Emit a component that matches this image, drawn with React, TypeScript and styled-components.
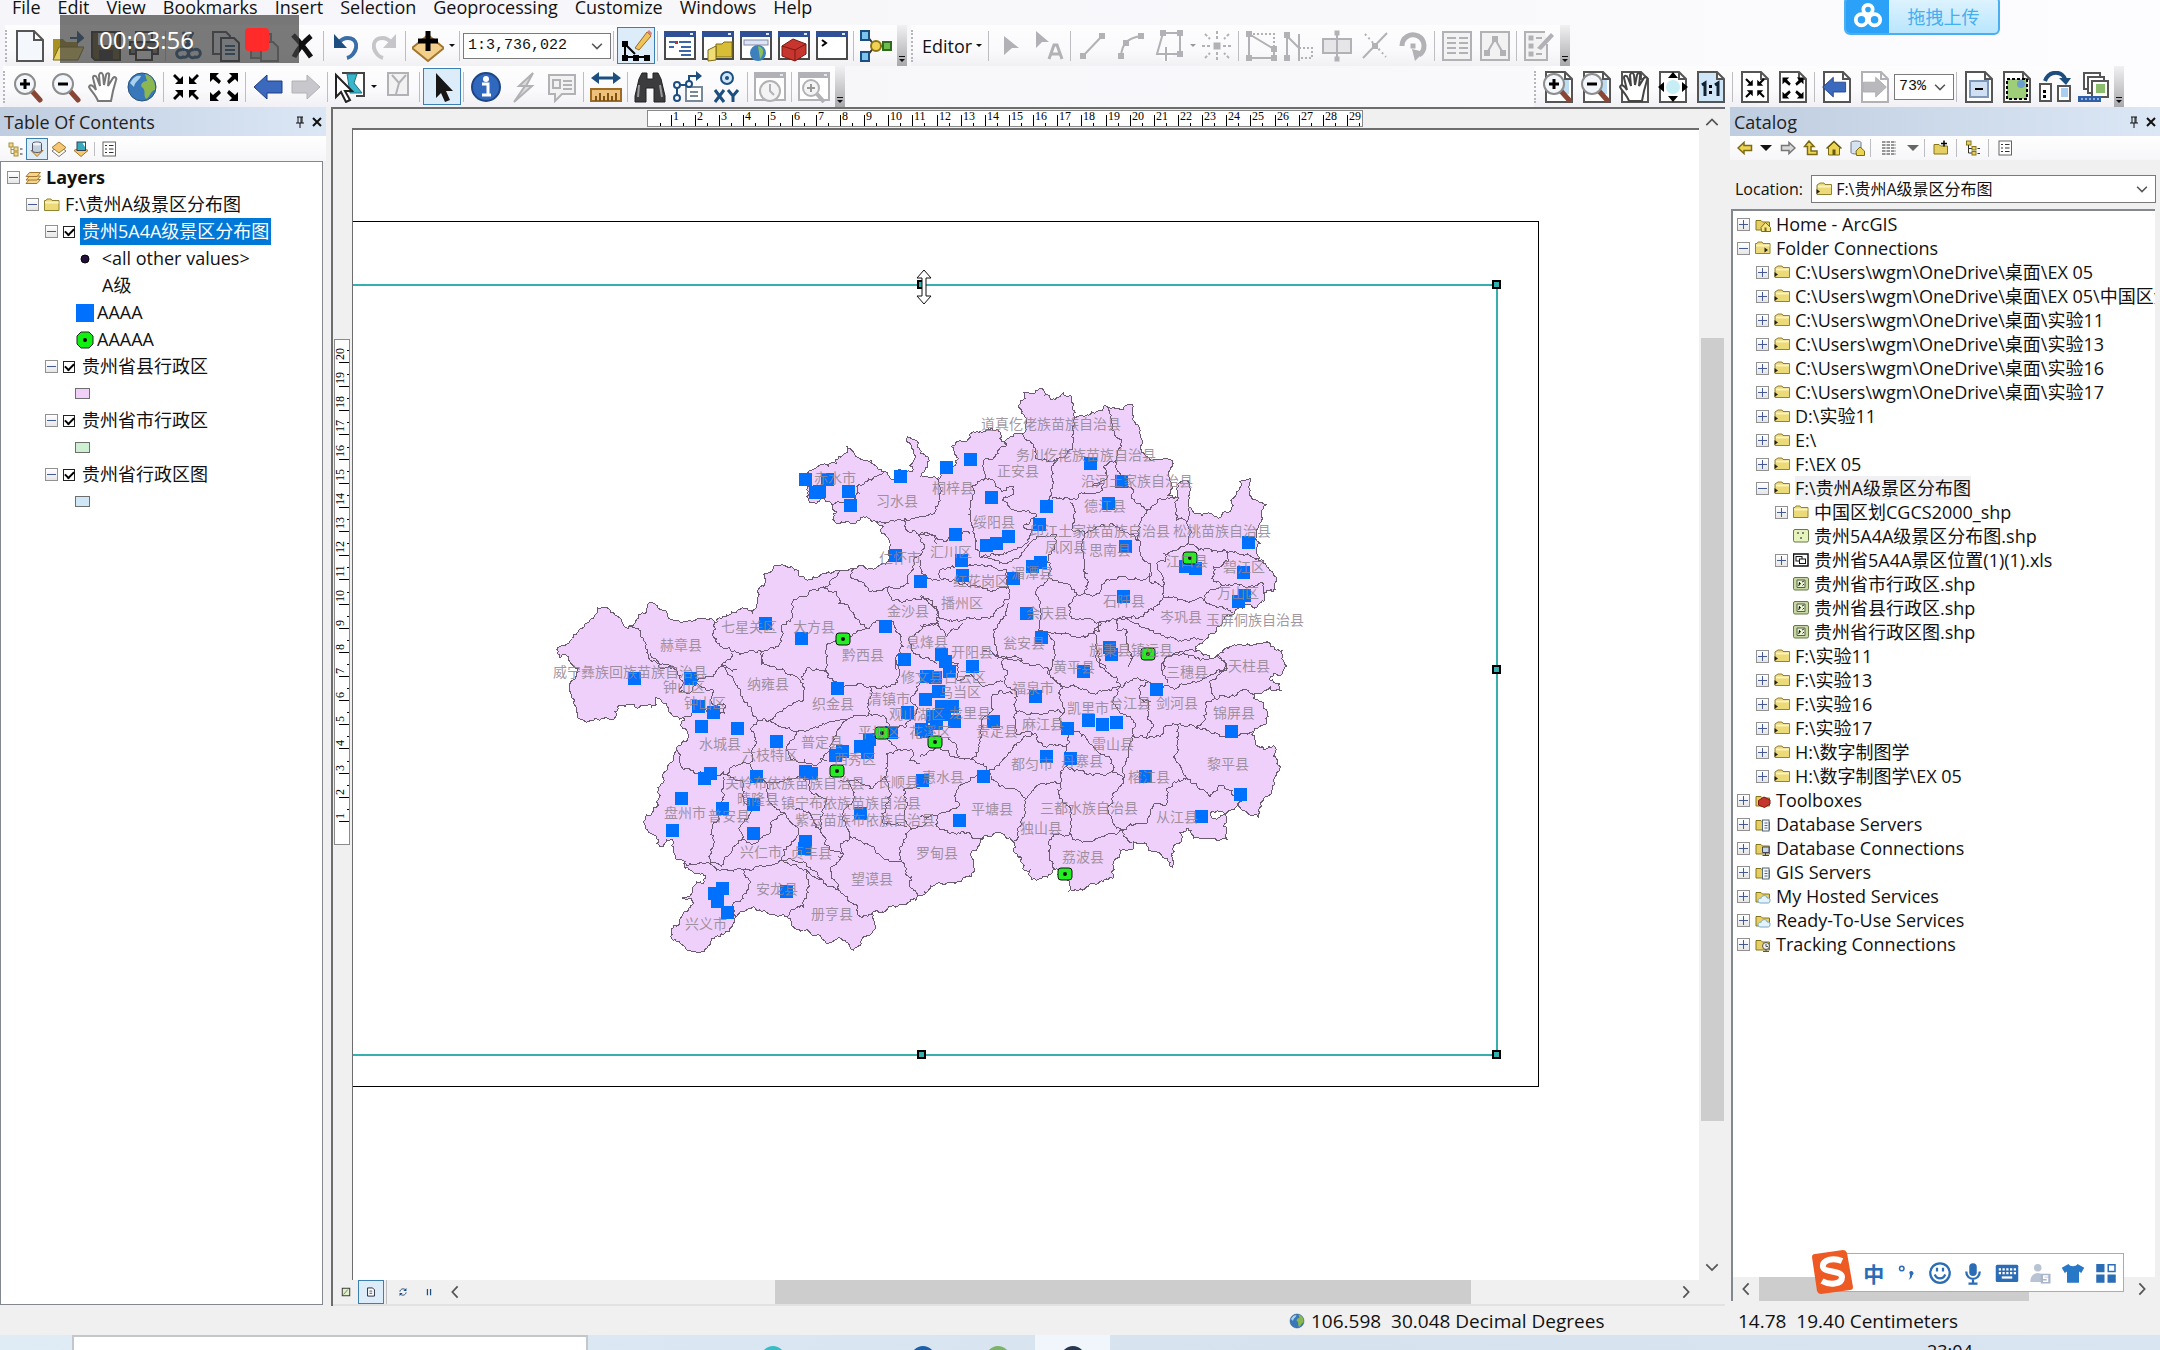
import React from 'react';
import styled, { createGlobalStyle, css } from 'styled-components';

const UI_FONT = "'Open Sans', 'Noto Sans CJK SC', sans-serif";
const MONO_FONT = "'Liberation Mono', 'Noto Sans CJK SC', monospace";

const GlobalStyle = createGlobalStyle`
  * { box-sizing: border-box; }
  body { margin: 0; background: #f0f0f0; font-family: ${UI_FONT}; font-size: 18px; color: #111; overflow: hidden; }
  button, select, input { font: inherit; color: inherit; margin: 0; }
  button { border: 0; padding: 0; background: none; }
`;

/* ---------- icons (32 x 32 grid) ---------- */

const G = '#b2b2b6';
const BLUE = '#1c4f80';
const NAVY = '#2f4f96';

const sheetShape = (c = '#555', fill = '#fff') => (
  <path d="M3 1H22L29 8V31H3Z M22 1V8H29" fill={fill} stroke={c} strokeWidth="2" />
);
const windowShape = (bar = NAVY, line = '#4a4a4a', fill = '#fff') => (
  <>
    <rect x="1" y="2" width="30" height="27" fill={fill} stroke={line} strokeWidth="2" />
    <rect x="0" y="1" width="32" height="6" fill={bar} />
    <rect x="26" y="3" width="3" height="2" fill="#dfe8f7" />
  </>
);
const lens = (sign: 'plus' | 'minus', x = 0) => (
  <g transform={`translate(${x} 0)`}>
    <path d="M20 20L28 29" stroke="#8a4634" strokeWidth="5" strokeLinecap="round" />
    <circle cx="13" cy="13" r="10" fill="#f3f7fb" stroke="#8d8d8d" strokeWidth="2" />
    <path d={sign === 'plus' ? 'M8 13H18M13 8V18' : 'M8 13H18'} stroke="#000" strokeWidth="3" />
  </g>
);
const handPath = 'M10 30C8 24 3 20 1 16C2 13 5 14 8 19L5 7C5 4 8 4 9 7L12 15L11 4C12 1 14 1 15 4L16 14L18 4C19 1 22 2 21 5L20 15L25 7C27 5 29 7 28 9L25 20L23 30Z';
const arrowsIn = (
  <g fill="#000">
    <path d="M13 13H5L8 10L3 5L5 3L10 8L13 5ZM19 13H27L24 10L29 5L27 3L22 8L19 5ZM13 19H5L8 22L3 27L5 29L10 24L13 27ZM19 19H27L24 22L29 27L27 29L22 24L19 27Z" />
  </g>
);
const arrowsOut = (
  <path fill="#000" d="M2 2H11L8 5L13 10L11 13L5 8L2 11ZM30 2H21L24 5L19 10L21 13L27 8L30 11ZM2 30H11L8 27L13 22L11 19L5 24L2 21ZM30 30H21L24 27L19 22L21 19L27 24L30 21Z" />
);
const globe = (
  <>
    <circle cx="16" cy="16" r="14" fill="#3877ba" stroke="#24527f" />
    <path d="M19 3C27 5 30 12 29 19C24 20 25 25 20 28C17 24 20 20 17 17C13 15 16 10 21 10Z" fill="#8bb751" />
    <path d="M4 12C8 5 12 4 15 5C13 10 9 10 8 16Z" fill="#a9d2ef" />
  </>
);
const dots = (pts: number[][], c = G, s = 6) => pts.map(([x, y], i) => (
  <rect key={i} x={x - s / 2} y={y - s / 2} width={s} height={s} fill={c} />
));
const arrowLeft = (c: string, line: string) => (
  <path d="M2 16L15 4V10H30V22H15V28Z" fill={c} stroke={line} strokeWidth="1" />
);
const folder = (
  <path d="M2 9H12L15 12H29V28H2Z" fill="#e5cf62" stroke="#86741c" strokeWidth="2" />
);

const ICONS: Record<string, React.ReactNode> = {
  new: <path d="M3 1H20L29 10V31H3Z M20 1V10H29" fill="#f4f8fd" stroke="#555" strokeWidth="2" />,
  open: <><path d="M1 9H11L14 12H26V29H1Z" fill="#a89120" /><path d="M1 30L7 17H32L26 30Z" fill="#e8d264" stroke="#7a6a18" /><path d="M18 8H26M26 3V12L31 8Z" stroke={BLUE} strokeWidth="2" fill={BLUE} /></>,
  save: <><path d="M2 2H30V30H5L2 27Z" fill="#5a4f1c" stroke="#222" strokeWidth="2" /><rect x="8" y="3" width="16" height="12" fill="#ddd" /><rect x="9" y="20" width="14" height="10" fill="#222" /></>,
  print: <><rect x="8" y="2" width="16" height="10" fill="#eee" stroke="#333" strokeWidth="2" /><rect x="2" y="12" width="28" height="12" fill="#777" stroke="#222" strokeWidth="2" /><rect x="8" y="20" width="16" height="10" fill="#fff" stroke="#222" strokeWidth="2" /></>,
  cut: <path d="M11 2L20 20M21 2L12 20M10 20A4 4 0 1 0 11 27A4 4 0 1 0 10 20M22 20A4 4 0 1 0 23 27A4 4 0 1 0 22 20" stroke={BLUE} strokeWidth="3" fill="none" />,
  copy: <><path d="M3 2H16L20 6V24H3Z" fill="#eef3fa" stroke="#445" strokeWidth="2" /><path d="M11 8H24L29 13V31H11Z" fill="#eef3fa" stroke="#334" strokeWidth="2" /><path d="M15 16H25M15 20H25M15 24H25" stroke={BLUE} strokeWidth="2" /></>,
  paste: <><rect x="3" y="4" width="20" height="24" fill="#ccc" stroke="#888" strokeWidth="2" /><path d="M13 12H25L30 17V31H13Z" fill="#eee" stroke="#888" strokeWidth="2" /></>,
  remove: <path d="M7 5C12 10 20 20 25 27M25 6C19 11 12 19 8 27" stroke="#111" strokeWidth="5" fill="none" />,
  undo: <><path d="M8 13C16 4 28 8 26 18C25 23 21 27 17 28" fill="none" stroke="#3a6ea8" strokeWidth="4" /><path d="M4 4V18H17Z" fill={BLUE} /></>,
  redo: <><path d="M24 13C16 4 4 8 6 18C7 23 11 27 15 28" fill="none" stroke="#c6c6ca" strokeWidth="4" /><path d="M28 4V18H15Z" fill="#c6c6ca" /></>,
  add: <><path d="M0 18L16 5L32 18L16 31Z" fill="#f3cf8c" stroke="#a2762c" strokeWidth="2" /><path d="M16 1V21M6 11H26" stroke="#000" strokeWidth="5" /></>,
  edit: <><path d="M5 14V27H25" stroke="#000" strokeWidth="2" fill="none" /><path d="M5 14L15 24" stroke="#000" strokeWidth="2" />{dots([[5, 14], [5, 28], [16, 28], [27, 28]], '#000', 6)}<path d="M15 18L27 2L31 6L19 20Z" fill="#f0c35a" stroke="#9c6a20" /><path d="M27 2L31 6L32 3L29 0Z" fill="#d98080" /></>,
  table: <>{windowShape()}<path d="M5 12H13M5 17H10M15 12H27M17 17H27M15 21H27M17 25H27" stroke="#3b66a8" strokeWidth="2" /><rect x="11" y="11" width="3" height="3" fill="#b33" /></>,
  catalog: <>{windowShape()}<path d="M14 14H20L22 12H30V27H14Z" fill="#d8bd36" stroke="#7c6a14" /><path d="M6 20L14 16V30L6 31Z" fill="#f0dd74" stroke="#7c6a14" /></>,
  search: <>{windowShape()}<rect x="4" y="10" width="24" height="5" fill="#dbe6f4" stroke="#88a" /><circle cx="18" cy="23" r="8" fill="#3c80bd" /><path d="M18 16C24 17 25 23 20 29Z" fill="#8bc05a" /></>,
  toolbox: <>{windowShape()}<path d="M4 16L15 9L28 14V24L17 31L4 26Z" fill="#c7362e" stroke="#7d1713" /><path d="M4 16L17 20L28 14M17 20V31" stroke="#7d1713" fill="none" /></>,
  python: <>{windowShape()}<path d="M6 10L10 13L6 16" stroke="#000" strokeWidth="2" fill="none" /></>,
  model: <><path d="M8 7L14 15M8 25L14 17M20 16H24" stroke="#333" strokeWidth="2" /><rect x="1" y="1" width="8" height="9" fill="#7cc4ee" stroke="#1c4f80" strokeWidth="2" /><rect x="1" y="22" width="8" height="9" fill="#7cc4ee" stroke="#1c4f80" strokeWidth="2" /><circle cx="16" cy="16" r="5" fill="#f2d254" stroke="#8c7414" strokeWidth="2" /><rect x="23" y="12" width="8" height="8" fill="#6dbb4c" stroke="#2c6c1c" strokeWidth="2" /></>,
  gArrow: <path d="M9 6L24 18H17L9 25Z" fill={G} />,
  gArrowA: <><path d="M3 1L16 12H9L3 18Z" fill={G} /><path d="M16 29L21 15H24L29 29M18 24H27" fill="none" stroke={G} strokeWidth="3" /></>,
  gLine: <><path d="M6 26L25 6" stroke={G} strokeWidth="2" />{dots([[6, 26], [25, 6]])}</>,
  gArc: <><path d="M6 26C7 14 12 8 26 6" stroke={G} strokeWidth="2" fill="none" />{dots([[6, 26], [11, 13], [26, 6]])}</>,
  gPoly: <><path d="M4 24L10 3H27V24Z" stroke={G} strokeWidth="2" fill="none" />{dots([[10, 3], [27, 3], [27, 24]])}<path d="M13 17V31M6 24H20" stroke="#fff" strokeWidth="5" /><path d="M13 17V31M6 24H20" stroke={G} strokeWidth="2" /></>,
  gPoint: <>{dots([[16, 16]], G, 7)}<path d="M16 1V10M16 22V31M1 16H10M22 16H31M4 4L9 9M28 4L23 9M4 28L9 23M28 28L23 23" stroke={G} strokeWidth="2" strokeDasharray="3 2" /></>,
  gCut: <><path d="M4 4V28H29V19L4 4" stroke={G} strokeWidth="2" fill="none" /><path d="M4 4H29V19" stroke={G} strokeWidth="2" strokeDasharray="2 2" fill="none" />{dots([[4, 4], [4, 28], [29, 28], [29, 19]])}</>,
  gReshape: <><path d="M4 28V6L16 18M16 4V31" stroke={G} strokeWidth="2" fill="none" /><path d="M16 18H29V28H16" stroke={G} strokeWidth="2" strokeDasharray="2 2" fill="none" />{dots([[4, 5], [4, 28]])}</>,
  gSplit: <><rect x="2" y="9" width="28" height="14" fill="#e6e6e8" stroke={G} strokeWidth="2" /><path d="M16 1V31" stroke={G} strokeWidth="2" />{dots([[16, 3], [16, 29]], G, 5)}</>,
  gCross: <><path d="M4 28L28 3" stroke={G} strokeWidth="2" /><path d="M6 4L27 27" stroke={G} strokeWidth="2" strokeDasharray="2 3" />{dots([[16, 16]])}</>,
  gRotate: <><path d="M5 16A11 11 0 1 1 22 25" stroke={G} strokeWidth="5" fill="none" /><path d="M15 19L27 22L18 31Z" fill={G} />{dots([[16, 16]], G, 5)}</>,
  gAttr: <><rect x="2" y="2" width="28" height="28" fill="#f2f2f3" stroke={G} strokeWidth="2" /><path d="M6 8H15M18 8H27M6 13H15M18 13H27M6 18H15M18 18H27M6 23H15M18 23H27" stroke={G} strokeWidth="2" /></>,
  gSketch: <><rect x="2" y="2" width="28" height="28" fill="#f2f2f3" stroke={G} strokeWidth="2" /><path d="M8 23L16 9L24 23" stroke={G} strokeWidth="2" fill="none" />{dots([[8, 23], [16, 9], [24, 23]])}</>,
  gCreate: <><path d="M24 14V30H2V2H22" fill="#f2f2f3" stroke={G} strokeWidth="2" />{dots([[8, 8], [8, 16], [8, 24]], G, 5)}<path d="M13 8H19M13 24H19" stroke={G} strokeWidth="2" /><path d="M14 18L28 3L31 6L18 20Z" fill={G} /></>,
  zoomIn: lens('plus'),
  zoomOut: lens('minus'),
  hand: <path d={handPath} fill="#fff" stroke="#777" strokeWidth="2" />,
  globe,
  fixedIn: arrowsIn,
  fixedOut: arrowsOut,
  back: arrowLeft('#3a69bd', '#1d3f85'),
  forward: <g transform="translate(32 0) scale(-1 1)">{arrowLeft('#c8c8cc', '#b2b2b6')}</g>,
  select: <><path d="M8 2H30V25H22" fill="#fff" stroke="#444" strokeWidth="2" /><path d="M13 3H23L20 12L28 22L16 22Z" fill="#38b7cc" stroke="#216f86" /><path d="M2 4V26L7 21L12 31L16 29L11 20H18Z" fill="#fff" stroke="#222" strokeWidth="2" /></>,
  gClear: <><rect x="6" y="2" width="20" height="22" fill="#f2f2f3" stroke={G} strokeWidth="2" /><path d="M10 4L17 12L24 4M17 12L14 23" stroke={G} strokeWidth="2" fill="none" /></>,
  pointer: <path d="M10 2V27L15 22L19 31L24 29L20 20H27Z" fill="#161616" />,
  info: <><circle cx="16" cy="16" r="14" fill="#3068bd" stroke="#1d4587" strokeWidth="2" /><circle cx="16" cy="8" r="3" fill="#fff" /><path d="M12 13H18V24M12 24H21" stroke="#fff" strokeWidth="3" fill="none" /></>,
  gFlash: <path d="M25 2L11 15H17L6 31L24 15H18Z" fill="#ddd" stroke={G} strokeWidth="2" />,
  gHtml: <><path d="M3 4H29V23H16L9 30V23H3Z" fill="#f2f2f3" stroke={G} strokeWidth="2" /><rect x="7" y="9" width="7" height="8" fill="none" stroke={G} strokeWidth="2" /><path d="M17 10H26M17 14H26M17 18H26" stroke={G} strokeWidth="2" /></>,
  measure: <><path d="M5 7H27" stroke={BLUE} strokeWidth="3" /><path d="M9 1V13L1 7ZM23 1V13L31 7Z" fill={BLUE} /><rect x="1" y="18" width="30" height="12" fill="#eec07a" stroke="#9d6c24" strokeWidth="2" /><path d="M6 30V25M10 30V22M14 30V25M18 30V22M22 30V25M26 30V22" stroke="#7d5215" strokeWidth="2" /></>,
  find: <><path d="M8 2H13V8H19V2H24L27 8L31 25V31H20V17H12V31H1V25L5 8Z" fill="#3c3c3e" stroke="#222" /><path d="M5 14L4 26M26 14L28 26" stroke="#9a9a9c" strokeWidth="2" /></>,
  route: <><path d="M5 26V14H17V5H26" stroke={BLUE} strokeWidth="2" fill="none" /><path d="M24 0V10L30 5Z" fill={BLUE} /><rect x="14" y="16" width="16" height="14" fill="#fff" stroke="#789" strokeWidth="2" /><path d="M18 21H26M18 25H26" stroke="#789" strokeWidth="2" /><circle cx="5" cy="27" r="3" fill="#fff" stroke={BLUE} strokeWidth="2" /><circle cx="5" cy="14" r="3" fill="#fff" stroke={BLUE} strokeWidth="2" /><circle cx="17" cy="13" r="3" fill="#fff" stroke={BLUE} strokeWidth="2" /></>,
  xy: <><circle cx="17" cy="7" r="6" fill="#cfe6f8" stroke={BLUE} strokeWidth="2" /><circle cx="17" cy="7" r="2" fill={BLUE} /><path d="M5 19L14 31M14 19L5 31M18 19L23 25L28 19M23 25V31" stroke={BLUE} strokeWidth="3" fill="none" /></>,
  gTime: <>{windowShape(G, G)}<circle cx="16" cy="20" r="10" fill="#f4f4f5" stroke={G} strokeWidth="2" /><path d="M16 13V20L20 24" stroke={G} strokeWidth="2" fill="none" /></>,
  gViewer: <>{windowShape(G, G)}<circle cx="13" cy="17" r="8" fill="#f4f4f5" stroke={G} strokeWidth="2" /><path d="M13 13V21M9 17H17" stroke="#999" strokeWidth="2" /><path d="M19 23L26 31" stroke={G} strokeWidth="4" /></>,
  pZoomIn: <>{sheetShape()}<rect x="14" y="9" width="12" height="14" fill="#bcdcf2" />{lens('plus', -2)}</>,
  pZoomOut: <>{sheetShape()}<rect x="14" y="9" width="12" height="14" fill="#bcdcf2" />{lens('minus', -2)}</>,
  pPan: <>{sheetShape()}<path d={handPath} fill="#fff" stroke="#444" strokeWidth="2" /></>,
  pFull: <>{sheetShape()}<circle cx="16" cy="16" r="7" fill="#c7edf5" /><path d="M16 1L21 7H11ZM16 31L21 25H11ZM1 16L7 11V21ZM31 16L25 11V21Z" fill="#000" /></>,
  pActual: <>{sheetShape('#555', '#cfe6f8')}<path d="M7 14L10 12V25M20 14L23 12V25" fill="none" stroke="#123" strokeWidth="3" /><rect x="14" y="14" width="3" height="3" /><rect x="14" y="20" width="3" height="3" /></>,
  pIn: <>{sheetShape()}<g transform="translate(4 5) scale(0.75)">{arrowsIn}</g></>,
  pOut: <>{sheetShape()}<g transform="translate(4 5) scale(0.75)">{arrowsOut}</g></>,
  pBack: <>{sheetShape()}<g transform="translate(0 3) scale(0.82)">{arrowLeft('#3a69bd', '#1d3f85')}</g></>,
  pForward: <>{sheetShape(G)}<g transform="translate(29 3) scale(-0.82 0.82)">{arrowLeft('#b9b9bd', '#a8a8ac')}</g></>,
  pDraft: <>{sheetShape()}<rect x="7" y="10" width="18" height="16" fill="#cfe0f2" stroke="#7d98b8" strokeWidth="2" /><path d="M12 18H20" stroke="#000" strokeWidth="2" /></>,
  pFocus: <>{sheetShape()}<rect x="6" y="8" width="20" height="20" fill="#9fce78" stroke="#000" strokeWidth="2" strokeDasharray="3 2" /><circle cx="20" cy="13" r="4" fill="#6b9fd0" /></>,
  pLayout: <><path d="M6 10C10 -1 24 -1 27 10" stroke={BLUE} strokeWidth="4" fill="none" /><path d="M20 7H32L27 14Z" fill={BLUE} /><path d="M1 13H12V30H1ZM19 15H31V30H19Z" fill="#fff" stroke="#555" strokeWidth="2" /><rect x="22" y="17" width="7" height="9" fill="#a8cdee" /><rect x="4" y="19" width="3" height="3" /><rect x="4" y="24" width="3" height="3" /></>,
  pPages: <><rect x="7" y="2" width="16" height="16" fill="#fff" stroke="#555" strokeWidth="2" /><rect x="11" y="6" width="16" height="16" fill="#fff" stroke="#555" strokeWidth="2" /><rect x="15" y="10" width="16" height="16" fill="#fff" stroke="#555" strokeWidth="2" /><rect x="19" y="13" width="9" height="9" fill="#8bbd6a" /><rect x="1" y="25" width="23" height="6" fill="#2e5fa8" /><path d="M4 28H22" stroke="#fff" strokeDasharray="2 2" /></>,
  tocOrder: <><rect x="4" y="4" width="8" height="8" fill="#f0d794" stroke="#a98f3c" strokeWidth="2" /><path d="M8 12V25H14M8 17H14" stroke="#a98f3c" strokeWidth="2" fill="none" /><rect x="14" y="12" width="8" height="8" fill="#f0d794" stroke="#a98f3c" strokeWidth="2" /><rect x="14" y="22" width="8" height="8" fill="#f0d794" stroke="#a98f3c" strokeWidth="2" /><path d="M26 16H31M26 26H31" stroke="#333" strokeWidth="2" /></>,
  tocSource: <><path d="M4 19L16 31L28 19Z" fill="#f3c871" stroke="#a2762c" strokeWidth="2" /><path d="M7 5C7 1 25 1 25 5V20C25 24 7 24 7 20Z" fill="#c3cfdd" stroke="#556" strokeWidth="2" /><ellipse cx="16" cy="6" rx="8" ry="3" fill="#eef3f8" /></>,
  tocVisible: <><path d="M2 20L16 10L30 20L16 31Z" fill="#fff" stroke="#777" strokeWidth="2" /><path d="M2 13L16 2L30 13L16 24Z" fill="#f3c871" stroke="#a2762c" strokeWidth="2" /></>,
  tocSelect: <><path d="M2 19L16 31L30 19L16 12Z" fill="#f3c871" stroke="#a2762c" strokeWidth="2" /><rect x="8" y="2" width="17" height="17" fill="#39a9bd" stroke="#345" strokeWidth="2" /><path d="M19 4H24V12Z" fill="#fff" /></>,
  options: <><rect x="4" y="2" width="25" height="28" fill="#fff" stroke="#666" strokeWidth="2" /><path d="M8 9H12M16 9H25M8 16H12M16 16H25M8 23H12M16 23H25" stroke="#333" strokeWidth="2" /></>,
  cBack: <path d="M2 16L14 5V11H29V21H14V27Z" fill="#ecd454" stroke="#7c6a14" strokeWidth="3" />,
  cForward: <path d="M30 16L18 5V11H3V21H18V27Z" fill="#d8d8da" stroke="#777" strokeWidth="3" />,
  cUp: <path d="M12 2L22 13H16V22H28V29H9V13H3Z" fill="#ecd454" stroke="#7c6a14" strokeWidth="3" />,
  cHome: <><path d="M5 15V30H27V15L16 4Z" fill="#ecd454" stroke="#7c6a14" strokeWidth="2" /><path d="M1 17L16 3L31 17" stroke="#6a5a10" strokeWidth="3" fill="none" /><rect x="13" y="19" width="6" height="11" fill="#6a5a10" /></>,
  cDb: <><path d="M4 5C4 1 24 1 24 5V25C24 29 4 29 4 25Z" fill="#d5e3f0" stroke="#778" strokeWidth="2" /><path d="M14 22L22 14L31 22V31H15Z" fill="#ecd454" stroke="#7c6a14" strokeWidth="2" /></>,
  cList: <path d="M2 4H30M2 10H30M2 16H30M2 22H30M2 28H30" stroke="#333" strokeWidth="2" strokeDasharray="7 2" />,
  cConnect: <>{folder}<path d="M22 1V13M16 7H28" stroke="#000" strokeWidth="3" /></>,
  cTree: <><rect x="3" y="2" width="9" height="8" fill="#e5cf62" stroke="#86741c" strokeWidth="2" /><path d="M7 10V26H14M7 17H14" stroke="#333" strokeWidth="2" fill="none" /><rect x="14" y="13" width="8" height="7" fill="#e5cf62" stroke="#86741c" strokeWidth="2" /><rect x="14" y="23" width="8" height="7" fill="#e5cf62" stroke="#86741c" strokeWidth="2" /><path d="M25 17H30M25 27H30" stroke="#333" strokeWidth="2" /></>,
  layers: <><path d="M2 27L9 19H31L24 27Z" fill="#f6d48c" stroke="#a2762c" strokeWidth="2" /><path d="M2 20L9 12H31L24 20Z" fill="#f6d48c" stroke="#a2762c" strokeWidth="2" /><path d="M2 13L9 5H31L24 13Z" fill="#f6d48c" stroke="#a2762c" strokeWidth="2" /></>,
  folder: <><path d="M1 7H4L6 4H14L16 7H30V27H1Z" fill="#ecd978" stroke="#93822f" strokeWidth="2" /><path d="M2 11H29" stroke="#fbf3be" strokeWidth="4" /></>,
  folderLink: <><path d="M2 8L8 4H16L18 7H31V27H2Z" fill="#ecd978" stroke="#93822f" strokeWidth="2" /><path d="M4 11H30" stroke="#fbf3be" strokeWidth="4" /><path d="M1 16L8 21L1 26Z" fill="#222" /></>,
  folderHome: <>{folder}<path d="M12 23L21 13L31 23V31H13Z" fill="#f6e684" stroke="#7c6a14" strokeWidth="2" /><rect x="19" y="23" width="4" height="8" fill="#7c6a14" /></>,
  folderConn: <><path d="M1 7H4L6 4H14L16 7H30V27H1Z" fill="#ecd978" stroke="#93822f" strokeWidth="2" /><path d="M2 11H29" stroke="#fbf3be" strokeWidth="4" /><path d="M19 15L26 20L19 25Z" fill="#222" /></>,
  folderTool: <>{folder}<path d="M7 17L18 10L30 16V24L19 31L7 26Z" fill="#c7362e" stroke="#7d1713" strokeWidth="2" /></>,
  folderServer: <>{folder}<rect x="15" y="8" width="13" height="22" fill="#f3f7fb" stroke="#567" strokeWidth="2" /><path d="M19 14H25M19 19H25M19 24H25" stroke="#567" strokeWidth="2" /></>,
  folderDb: <>{folder}<path d="M15 14H28V25H15Z" fill="#c5d6e8" stroke="#445" strokeWidth="2" /><path d="M21 25V31M15 31H28" stroke="#445" strokeWidth="2" /></>,
  folderCloud: <>{folder}<path d="M8 29C3 24 9 19 12 21C14 13 24 14 24 20C31 19 32 27 27 30H9Z" fill="#e3f2fb" stroke="#7ba6c4" strokeWidth="2" /></>,
  folderTrack: <>{folder}<circle cx="22" cy="20" r="7" fill="#eee" stroke="#555" strokeWidth="2" /><path d="M22 16V21H26M22 27V31M16 31H28" stroke="#555" strokeWidth="2" fill="none" /></>,
  shpPoint: <><rect x="1" y="3" width="30" height="25" rx="3" fill="#e6f3bd" stroke="#67774a" strokeWidth="2" />{dots([[10, 10], [20, 10], [16, 20]], '#333', 3)}</>,
  shpPoly: <><rect x="1" y="3" width="30" height="25" rx="3" fill="#c8d8a4" stroke="#67774a" strokeWidth="2" /><path d="M8 8H24V23H8Z" fill="#e9f3d2" stroke="#555f44" strokeWidth="2" /><path d="M11 20L15 15L12 12M18 12L22 10M19 19L22 16" stroke="#333" strokeWidth="2" /></>,
  xls: <><rect x="1" y="4" width="29" height="24" fill="#fff" stroke="#111" strokeWidth="3" /><rect x="6" y="9" width="12" height="9" fill="#fff" stroke="#111" strokeWidth="2" /><rect x="13" y="14" width="12" height="9" fill="#fff" stroke="#111" strokeWidth="2" /></>,
  dataView: <><rect x="4" y="4" width="24" height="24" fill="#dfeecb" stroke="#333" strokeWidth="3" /><path d="M8 24L22 8" stroke="#6b8c4a" strokeWidth="3" /></>,
  layoutView: <><path d="M5 3H21L27 9V29H5Z" fill="#fff" stroke="#223" strokeWidth="3" /><path d="M11 13H20M11 20H20" stroke="#346" strokeWidth="3" /></>,
  refresh: <><path d="M6 15C7 6 18 3 24 9M26 17C25 26 14 29 8 23" fill="none" stroke={BLUE} strokeWidth="3" /><path d="M27 3V13H17ZM5 29V19H15Z" fill={BLUE} /></>,
  pause: <path d="M9 6H13V26H9ZM19 6H23V26H19Z" fill={BLUE} />,
};

const Svg = styled.svg<{ $s: number }>`
  width: ${p => p.$s}px;
  height: ${p => p.$s}px;
  flex: none;
  display: block;
`;
const Icon = ({ name, size = 32 }: { name: string; size?: number }) => (
  <Svg $s={size} viewBox="0 0 32 32" aria-hidden="true">{ICONS[name]}</Svg>
);

/* ---------- shell ---------- */

const Shell = styled.div`
  height: 100vh;
  display: flex;
  flex-direction: column;
  background: #f0f0f0;
`;
const Chrome = styled.header`
  background: linear-gradient(90deg, #f6f5f9 0%, #f8f7fa 60%, #fdfcff 100%);
  display: flex;
  flex-direction: column;
`;
const MenuBar = styled.nav`
  height: 25px;
  display: flex;
  gap: 17px;
  padding-left: 12px;
`;
const MenuItem = styled.button`
  font-size: 18px;
  line-height: 14px;
  height: 14px;
  white-space: nowrap;
`;
const BarRow = styled.div<{ $spread?: boolean }>`
  display: flex;
  height: 41px;
  gap: 4px;
  padding: 0 36px 0 ${p => (p.$spread ? 3 : 5)}px;
  justify-content: ${p => (p.$spread ? 'space-between' : 'flex-start')};
`;
const Bar = styled.div`
  display: flex;
  align-items: center;
  background: linear-gradient(180deg, #fdfdfe, #fafafc 60%, #f1f0f4);
`;
const Grip = styled.span`
  width: 4px;
  height: 32px;
  margin-right: 2px;
  border-left: 2px dotted #b6b6ba;
`;
const Divider = styled.span<{ $h?: number }>`
  width: 2px;
  height: ${p => p.$h ?? 30}px;
  margin: 0 2px;
  border-left: 1px solid #bdbdc2;
  flex: none;
`;
const ToolButton = styled.button<{ $on?: boolean; $w?: number; $h?: number }>`
  width: ${p => p.$w ?? 38}px;
  height: ${p => p.$h ?? 37}px;
  display: grid;
  place-items: center;
  flex: none;
  ${p => p.$on && css`background: #dcecf8; box-shadow: inset 0 0 0 1px #3c7fb1;`}
`;
const Caret = styled.span<{ $c?: string; $s?: number }>`
  border: ${p => p.$s ?? 3}px solid transparent;
  border-top-color: ${p => p.$c ?? '#111'};
  border-bottom: 0;
`;
const EndCap = styled.button`
  align-self: stretch;
  width: 10px;
  margin-left: 2px;
  background: linear-gradient(180deg, #f1f1f3, #a9a9ad);
  display: flex;
  flex-direction: column;
  align-items: center;
  justify-content: flex-end;
  gap: 2px;
  padding-bottom: 4px;
  &::before { content: ''; width: 6px; border-top: 1px solid #111; }
`;
const TextButton = styled.button`
  display: flex;
  align-items: center;
  gap: 4px;
  padding: 0 4px 0 5px;
  font-size: 18px;
`;
const SelectBox = styled.span<{ $w?: number; $h: number }>`
  display: flex;
  align-items: center;
  height: ${p => p.$h}px;
  ${p => (p.$w ? css`width: ${p.$w}px;` : css`flex: 1;`)}
  background: #fff;
  border: 1px solid #7a7a7a;
  padding: 0 7px 0 4px;
  min-width: 0;
`;
const Select = styled.select<{ $mono?: boolean }>`
  appearance: none;
  border: 0;
  padding: 0;
  background: none;
  flex: 1;
  min-width: 0;
  width: 0;
  font-family: ${p => (p.$mono ? MONO_FONT : UI_FONT)};
  font-size: ${p => (p.$mono ? 15 : 16)}px;
`;
const Chevron = ({ dir = 'down', size = 12 }: { dir?: 'down' | 'up' | 'left' | 'right'; size?: number }) => {
  const d = { down: 'M3 10L16 23L29 10', up: 'M3 23L16 10L29 23', left: 'M22 3L10 16L22 29', right: 'M10 3L22 16L10 29' }[dir];
  return <Svg $s={size} viewBox="0 0 32 32" aria-hidden="true"><path d={d} fill="none" stroke="#555" strokeWidth="4" /></Svg>;
};

type Tool = string;
const Tools = ({ items }: { items: Tool[] }) => (
  <>
    {items.map((t, i) => {
      if (t === '|') return <Divider key={i} />;
      if (t === 'v') return <ToolButton key={i} $w={10} aria-label="more"><Caret /></ToolButton>;
      if (t === 'g') return <ToolButton key={i} $w={10} aria-label="more"><Caret $c="#999" /></ToolButton>;
      const on = t.startsWith('*');
      const name = on ? t.slice(1) : t;
      return <ToolButton key={i} $on={on} aria-label={name}><Icon name={name} /></ToolButton>;
    })}
  </>
);
const BarEnd = () => <EndCap aria-label="toolbar options"><Caret /></EndCap>;

/* ---------- docked panels ---------- */

const Main = styled.main`
  flex: 1;
  min-height: 0;
  display: flex;
`;
const Panel = styled.section<{ $w: number }>`
  width: ${p => p.$w}px;
  flex: none;
  display: flex;
  flex-direction: column;
  min-height: 0;
`;
const PanelHead = styled.h2`
  margin: 0;
  height: 29px;
  display: flex;
  align-items: center;
  padding: 0 4px;
  gap: 6px;
  font-size: 18px;
  font-weight: 400;
  color: #222;
  background: linear-gradient(90deg, #bfcde0, #dbe7f5);
`;
const HeadTitle = styled.span`flex: 1;`;
const HeadButton = styled.button`
  width: 11px;
  height: 16px;
  display: grid;
  place-items: center;
`;
const PinIcon = () => <Svg $s={12} viewBox="0 0 12 12"><path d="M3 1H9M4 1V7M8 1V7M7 1V7M2 7H10M6 7V12" stroke="#111" fill="none" /></Svg>;
const CloseIcon = () => <Svg $s={10} viewBox="0 0 10 10"><path d="M1 1L9 9M9 1L1 9" stroke="#111" strokeWidth="2" /></Svg>;
const PanelBar = styled.div<{ $h: number }>`
  height: ${p => p.$h}px;
  display: flex;
  align-items: center;
  padding-left: 4px;
  background: linear-gradient(180deg, #fff, #f6f5f8);
`;
const Tree = styled.ul<{ $kind: 'toc' | 'catalog' }>`
  list-style: none;
  margin: ${p => (p.$kind === 'toc' ? '0 3px 1px 0' : '0 5px 0 1px')};
  padding: ${p => (p.$kind === 'toc' ? '2px 0 0 6px' : '1px 0 0 4px')};
  flex: 1;
  background: #fff;
  border: solid #828790;
  border-width: ${p => (p.$kind === 'toc' ? '1px' : '2px 0 0 2px')};
  overflow: hidden;
`;
const Row = styled.li<{ $h: number; $pad: number }>`
  height: ${p => p.$h}px;
  padding-left: ${p => p.$pad}px;
  display: flex;
  align-items: center;
  gap: 5px;
  white-space: nowrap;
  font-size: 18px;
  line-height: ${p => p.$h}px;
`;
const Expander = styled.button<{ $plus?: boolean }>`
  width: 13px;
  height: 13px;
  flex: none;
  border: 1px solid #919191;
  background:
    linear-gradient(#445a94, #445a94) center / 9px 1px no-repeat,
    ${p => (p.$plus ? 'linear-gradient(#445a94, #445a94) center / 1px 9px no-repeat,' : '')}
    linear-gradient(180deg, #fff, #e6e6e8);
`;
const Blank = styled.span`width: 13px; flex: none;`;
const RowText = styled.span<{ $mark?: 'selected' | 'soft'; $bold?: boolean }>`
  font-weight: ${p => (p.$bold ? 700 : 400)};
  ${p => p.$mark === 'selected' && css`background: #0078d7; color: #fff;`}
  ${p => p.$mark === 'soft' && css`background: #f1f1f3;`}
`;
const LayerLabel = styled.label<{ $on?: boolean }>`
  padding: 0 2px;
  ${p => p.$on && css`background: #0078d7; color: #fff;`}
`;
const Check = styled.input`
  appearance: none;
  width: 12px;
  height: 12px;
  flex: none;
  border: 1px solid #222;
  background: #fff;
  display: grid;
  place-items: center;
  &:checked::after {
    content: '';
    width: 7px;
    height: 4px;
    border: solid #000;
    border-width: 0 0 2px 2px;
    transform: translateY(-1px) rotate(-45deg);
  }
`;
const Swatch = styled.span<{ $c: string }>`
  width: 15px;
  height: 11px;
  border: 1px solid #6e6e6e;
  background: ${p => p.$c};
`;
const Symbol = styled.svg`width: 18px; height: 18px; flex: none; margin-right: -2px;`;

const tocLayers = [
  { id: 'county', name: '贵州省县行政区', color: '#f0d0f8' },
  { id: 'city', name: '贵州省市行政区', color: '#cdf0d3' },
  { id: 'province', name: '贵州省行政区图', color: '#d0e8f5' },
];

const TocPanel = () => (
  <Panel $w={326}>
    <PanelHead>
      <HeadTitle>Table Of Contents</HeadTitle>
      <HeadButton aria-label="pin"><PinIcon /></HeadButton>
      <HeadButton aria-label="close"><CloseIcon /></HeadButton>
    </PanelHead>
    <PanelBar $h={25}>
      {['tocOrder', 'tocSource', 'tocVisible', 'tocSelect'].map(n => (
        <ToolButton key={n} $w={22} $h={22} $on={n === 'tocSource'} aria-label={n}><Icon name={n} size={16} /></ToolButton>
      ))}
      <Divider $h={14} />
      <ToolButton $w={22} $h={22} aria-label="options"><Icon name="options" size={16} /></ToolButton>
    </PanelBar>
    <Tree $kind="toc">
      <Row $h={27} $pad={0}><Expander aria-label="collapse" /><Icon name="layers" size={16} /><RowText $bold>Layers</RowText></Row>
      <Row $h={27} $pad={19}><Expander aria-label="collapse" /><Icon name="folder" size={16} /><RowText>F:\贵州A级景区分布图</RowText></Row>
      <Row $h={27} $pad={38}>
        <Expander aria-label="collapse" /><Check type="checkbox" id="sites" defaultChecked /><LayerLabel htmlFor="sites" $on>贵州5A4A级景区分布图</LayerLabel>
      </Row>
      <Row $h={27} $pad={69}><Symbol viewBox="0 0 18 18"><circle cx="9" cy="9" r="4" fill="#24103c" stroke="#000" /></Symbol><RowText>&nbsp;&lt;all other values&gt;</RowText></Row>
      <Row $h={27} $pad={95}><RowText>A级</RowText></Row>
      <Row $h={27} $pad={69}><Symbol viewBox="0 0 18 18"><rect width="18" height="18" fill="#0070ff" /></Symbol><RowText>AAAA</RowText></Row>
      <Row $h={27} $pad={69}><Symbol viewBox="0 0 18 18"><path d="M5 1H13L17 5V13L13 17H5L1 13V5Z" fill="#10f010" stroke="#222" /><circle cx="9" cy="9" r="2" /></Symbol><RowText>AAAAA</RowText></Row>
      {tocLayers.map(l => (
        <React.Fragment key={l.id}>
          <Row $h={27} $pad={38}>
            <Expander aria-label="collapse" /><Check type="checkbox" id={l.id} defaultChecked /><LayerLabel htmlFor={l.id}>{l.name}</LayerLabel>
          </Row>
          <Row $h={27} $pad={68}><Swatch $c={l.color} /></Row>
        </React.Fragment>
      ))}
    </Tree>
  </Panel>
);

type Node = [depth: number, mark: '+' | '-' | ' ', icon: string, text: string];
const catalogNodes: Node[] = [
  [0, '+', 'folderHome', 'Home - ArcGIS'],
  [0, '-', 'folderConn', 'Folder Connections'],
  [1, '+', 'folderLink', 'C:\\Users\\wgm\\OneDrive\\桌面\\EX 05'],
  [1, '+', 'folderLink', 'C:\\Users\\wgm\\OneDrive\\桌面\\EX 05\\中国区划'],
  [1, '+', 'folderLink', 'C:\\Users\\wgm\\OneDrive\\桌面\\实验11'],
  [1, '+', 'folderLink', 'C:\\Users\\wgm\\OneDrive\\桌面\\实验13'],
  [1, '+', 'folderLink', 'C:\\Users\\wgm\\OneDrive\\桌面\\实验16'],
  [1, '+', 'folderLink', 'C:\\Users\\wgm\\OneDrive\\桌面\\实验17'],
  [1, '+', 'folderLink', 'D:\\实验11'],
  [1, '+', 'folderLink', 'E:\\'],
  [1, '+', 'folderLink', 'F:\\EX 05'],
  [1, '-', 'folderLink', 'F:\\贵州A级景区分布图'],
  [2, '+', 'folder', '中国区划CGCS2000_shp'],
  [2, ' ', 'shpPoint', '贵州5A4A级景区分布图.shp'],
  [2, '+', 'xls', '贵州省5A4A景区位置(1)(1).xls'],
  [2, ' ', 'shpPoly', '贵州省市行政区.shp'],
  [2, ' ', 'shpPoly', '贵州省县行政区.shp'],
  [2, ' ', 'shpPoly', '贵州省行政区图.shp'],
  [1, '+', 'folderLink', 'F:\\实验11'],
  [1, '+', 'folderLink', 'F:\\实验13'],
  [1, '+', 'folderLink', 'F:\\实验16'],
  [1, '+', 'folderLink', 'F:\\实验17'],
  [1, '+', 'folderLink', 'H:\\数字制图学'],
  [1, '+', 'folderLink', 'H:\\数字制图学\\EX 05'],
  [0, '+', 'folderTool', 'Toolboxes'],
  [0, '+', 'folderServer', 'Database Servers'],
  [0, '+', 'folderDb', 'Database Connections'],
  [0, '+', 'folderServer', 'GIS Servers'],
  [0, '+', 'folderCloud', 'My Hosted Services'],
  [0, '+', 'folderCloud', 'Ready-To-Use Services'],
  [0, '+', 'folderTrack', 'Tracking Connections'],
];

const LocationRow = styled.div`
  height: 49px;
  display: flex;
  align-items: center;
  padding: 8px 4px 0 5px;
  gap: 10px;
  font-size: 16px;
`;
const LocationLabel = styled.label`width: 66px; flex: none;`;
const ScrollH = styled.div<{ $h: number }>`
  display: flex;
  align-items: center;
  height: ${p => p.$h}px;
  flex: 1;
  background: #f0f0f0;
`;
const ScrollV = styled.div`
  width: 26px;
  display: flex;
  flex-direction: column;
  align-items: center;
  flex: none;
  background: #f0f0f0;
`;
const ScrollArrow = styled.button`
  width: 26px;
  height: 26px;
  display: grid;
  place-items: center;
  flex: none;
`;
const Space = styled.span<{ $n: number }>`flex: ${p => p.$n} 1 0;`;
const ThumbH = styled.span<{ $n: number }>`flex: ${p => p.$n} 1 0; align-self: stretch; background: #cdcdcd;`;
const ThumbV = styled.span<{ $n: number }>`flex: ${p => p.$n} 1 0; width: 23px; background: #cdcdcd;`;
const CatalogFoot = styled.div`
  display: flex;
  margin: 0 5px 5px 1px;
  border-left: 2px solid #828790;
`;

const CatalogPanel = () => (
  <Panel $w={430}>
    <PanelHead>
      <HeadTitle>Catalog</HeadTitle>
      <HeadButton aria-label="pin"><PinIcon /></HeadButton>
      <HeadButton aria-label="close"><CloseIcon /></HeadButton>
    </PanelHead>
    <PanelBar $h={24}>
      <ToolButton $w={22} $h={22} aria-label="back"><Icon name="cBack" size={16} /></ToolButton>
      <ToolButton $w={20} $h={22} aria-label="history"><Caret $s={6} /></ToolButton>
      {['cForward', 'cUp', 'cHome', 'cDb'].map(n => (
        <ToolButton key={n} $w={23} $h={22} aria-label={n}><Icon name={n} size={16} /></ToolButton>
      ))}
      <Divider $h={18} />
      <ToolButton $w={30} $h={22} aria-label="list"><Icon name="cList" size={16} /></ToolButton>
      <ToolButton $w={18} $h={22} aria-label="views"><Caret $s={6} $c="#666" /></ToolButton>
      <Divider $h={18} />
      <ToolButton $w={26} $h={22} aria-label="connect"><Icon name="cConnect" size={16} /></ToolButton>
      <Divider $h={18} />
      <ToolButton $w={26} $h={22} aria-label="tree"><Icon name="cTree" size={16} /></ToolButton>
      <Divider $h={18} />
      <ToolButton $w={26} $h={22} aria-label="options"><Icon name="options" size={16} /></ToolButton>
    </PanelBar>
    <LocationRow>
      <LocationLabel htmlFor="location">Location:</LocationLabel>
      <SelectBox $h={28}>
        <Icon name="folderLink" size={16} />
        <Select id="location"><option>&nbsp;F:\贵州A级景区分布图</option></Select>
        <Chevron />
      </SelectBox>
    </LocationRow>
    <Tree $kind="catalog">
      {catalogNodes.map(([depth, mark, icon, text], i) => (
        <Row key={i} $h={24} $pad={depth * 19}>
          {mark === ' ' ? <Blank /> : <Expander $plus={mark === '+'} aria-label={mark === '+' ? 'expand' : 'collapse'} />}
          <Icon name={icon} size={16} />
          <RowText $mark={i === 11 ? 'soft' : undefined}>{text}</RowText>
        </Row>
      ))}
    </Tree>
    <CatalogFoot>
      <ScrollH $h={24}>
        <ScrollArrow aria-label="scroll left"><Chevron dir="left" size={14} /></ScrollArrow>
        <ThumbH $n={270} /><Space $n={100} />
        <ScrollArrow aria-label="scroll right"><Chevron dir="right" size={14} /></ScrollArrow>
      </ScrollH>
    </CatalogFoot>
  </Panel>
);

/* ---------- map data ----------
   Digitised per quarter sheet: each sheet has its own origin, three units to a pixel. */

type Pt = [number, number];
const sheet = (ox: number, oy: number) => (s: string): Pt[] =>
  s.trim().split(/\s+/).map(p => {
    const [x, y] = p.split(',').map(Number);
    return [ox + x / 3, oy + y / 3] as Pt;
  });
const NW = sheet(540, 370);
const NE = sheet(920, 370);
const SW = sheet(540, 650);
const SE = sheet(920, 650);

const outline: Pt[] = [
  ...NW('52,850 60,830 75,828 100,795 125,775 150,750 165,735 172,710 205,715 225,735 245,752 265,775 290,750 295,735 320,725 325,700 345,702 355,715 380,725 395,748 440,755 470,748 510,745 522,762 545,745 575,725 600,718 625,722 637,728 650,705 655,680 652,665 675,640 680,610 700,592 735,587 760,595 775,610 795,627 820,620 850,610 880,607 910,600 935,595 970,585 1010,592 1045,575 1050,560 1045,545 1050,520 1045,505 1025,490 1030,470 1010,455 975,442 960,450 930,460 905,455 885,455 882,440 890,425 877,410 870,395 845,385 830,400 805,390 803,370 805,350 800,320 815,300 840,285 890,280 895,260 915,250 920,228 935,240 945,255 965,268 995,270 1010,290 1035,305 1050,325 1065,325 1075,297 1100,305 1120,298 1108,287 1125,265 1120,240 1100,215 1102,200 1115,207 1135,220 1140,240 1165,262 1155,300 1140,320 1160,318 1190,325'),
  ...NE('60,325 62,310 75,290 85,298 110,280 115,265 95,230 120,212 145,208 160,185 200,178 235,180 245,215 258,225 255,212 280,200 310,192 318,155 305,130 297,105 315,85 312,68 345,70 368,57 375,75 405,88 430,68 455,82 458,110 465,145 485,135 515,125 550,115 555,105 580,112 610,118 630,105 640,110 640,140 655,165 660,200 668,215 660,235 675,255 700,270 735,265 757,272 750,300 748,330 755,345 745,375 760,385 775,385 770,355 785,335 805,335 812,360 808,385 805,410 820,425 855,430 875,430 895,445 915,425 930,425 935,400 950,370 960,335 990,325 990,365 1000,390 1040,405 1025,420 1020,460 1010,480 1010,500 1020,520 1010,545 1015,570 1040,590 1060,610 1068,635 1060,665 1030,665 1035,690 1010,712 975,705 955,715 935,735 915,740 905,765 880,790 865,800 850,815 835,825 825,840 845,850 870,865 890,855 925,835 965,825 1000,825 1040,815 1060,830 1090,840 1085,865'),
  ...SE('1100,48 1088,70 1060,72 1048,88 1080,100 1085,122 1050,112 1010,130 1000,145 1025,155 1030,175 1045,200 1030,225 1005,235 995,255 1005,280 1030,298 1065,290 1060,320 1080,355 1062,395 1055,425 1030,450 1015,500 990,495 965,480 960,455 945,475 900,485 870,490 880,505 920,500 910,530 925,570 900,570 870,565 820,565 815,540 800,535 780,548 785,575 760,590 755,620 758,655 735,625 710,605 685,600 665,580 640,575 635,600 600,600 590,625 580,650 578,685 540,695 500,710 445,725 450,700 420,680 415,665 400,655 395,670 365,685 335,688 330,660 308,655 305,625 280,600 285,580 260,565 240,547 215,560 190,560 180,580 155,605 160,630 165,660 155,680 120,695 80,700 50,700 30,705 10,735'),
  ...SW('1140,738 1110,755 1085,765 1040,780 1000,785 1005,825 990,855 965,870 940,900 915,870 890,868 865,880 830,855 790,840 760,830 735,800 725,795 690,795 665,785 640,770 610,785 590,800 580,820 570,845 540,860 515,865 500,895 465,905 435,890 410,875 392,860 395,835 420,815 430,790 460,760 448,745 425,745 450,738 460,710 470,695 490,700 497,678 475,670 450,660 435,655 435,635 405,620 400,575 380,570 360,590 350,580 350,560 325,545 315,525 320,495 335,490 355,465 355,420 368,400 370,370 385,345 400,330 410,300 445,262 440,240 420,225 435,205 405,200 385,185 370,160 348,142 335,170 300,170 270,165 240,165 225,185 218,210 190,205 150,210 115,205 110,180 105,150 90,110 100,90 115,55 90,35 75,12 58,22'),
];

const borders: Pt[][] = [
  ...[
    '1035,300 1000,325 975,335 950,350 960,370 945,395 915,395 875,402',
    '1190,325 1200,380 1185,425 1150,440 1095,445 1045,458 1005,453',
    '1095,445 1100,480 1135,492 1150,520 1145,550 1120,570 1110,610 1105,640 1060,655 1045,650',
    '1135,492 1180,495 1190,520',
    '935,590 935,625 965,635 990,665 1020,660 1045,650 1055,690 1080,695',
    '915,595 880,625 855,655 890,665 895,700 925,705 945,735 980,775',
    '855,655 815,660 800,680 760,690 755,745 725,765 715,830 670,845 665,885',
    '522,755 520,800 545,830 590,848 665,845',
    '265,770 295,775 310,810 330,870 380,885 410,900',
    '575,850 570,870 545,885 590,900',
    '980,775 940,790 900,805 865,820 858,870 860,910',
    '980,775 1020,750 1060,755 1075,790 1090,830 1065,870 1070,900',
    '1080,695 1150,680 1165,700 1190,710 1195,755 1150,765 1110,800 1120,850 1190,880',
    '1140,570 1145,610 1200,630',
  ].map(NW),
  ...[
    '260,220 225,260 190,275 195,325 155,350 150,400 155,465 165,520 180,560',
    '310,185 340,230 345,260 380,275 415,265',
    '195,325 225,340 245,365 280,350 275,375 245,390 270,415 310,420 340,430 350,440 310,470 345,480 320,520 270,545 180,562',
    '467,140 455,200 455,240 415,265 395,300 400,340 390,380 370,395',
    '555,100 575,150 575,180 605,210 590,260 585,275 550,290 555,330 515,350',
    '395,385 440,382 470,388 480,370 550,360 550,340 515,350',
    '585,275 600,310 610,350 640,360 635,385 685,420',
    '450,395 465,430 455,480 495,490 490,545 500,610 495,670 525,675 555,635 610,620 660,630 695,610 690,580 660,555 655,510 600,480 580,465 540,470 495,490',
    '685,420 660,460 655,510',
    '685,420 720,385 765,385',
    '770,380 770,450 805,455',
    '805,415 805,520 770,540 730,550 735,575 710,580 720,605 735,640 730,650 695,640 690,610',
    '805,520 850,540 920,545 960,555 1015,565',
    '920,545 925,575 880,590 875,625 905,645 950,640 985,650 1030,640 1035,670',
    '905,645 870,660 850,690 790,690 730,680 730,650',
    '850,690 900,710 940,730',
    '730,680 700,720 655,745 595,745 550,755 520,750 455,745 445,710 470,670 495,670',
    '385,560 385,620 430,640 470,670',
    '180,562 260,580 300,560 330,520 350,500 410,495 400,540 385,560',
    '0,490 40,495 60,510 150,490',
    '60,600 120,580 200,590 260,600 265,650 220,660 150,650 60,625 60,600',
    '0,680 30,690 55,740 130,750 220,740 260,690 265,650',
    '265,700 240,750 220,780 230,830 225,860 280,870 310,870',
    '0,765 55,760 80,800 130,760',
    '385,625 350,660 360,750 355,780 420,790 500,800 540,785 540,755',
    '355,780 390,800 405,840 400,880',
    '540,755 520,790 530,830 530,870 560,895',
    '595,745 590,780 620,780 625,830 640,860 625,890',
    '595,745 660,770 720,790 770,810 850,808',
    '885,850 920,880 900,910',
    '730,900 740,860 790,850 860,870 895,858',
  ].map(NE),
  ...[
    '190,0 250,30 255,90 290,130 290,185 350,190 400,180 430,190 415,130 430,110 390,75 385,55 310,40 290,20 250,25',
    '400,30 390,75 430,110 520,130 600,110 590,80 540,50 540,10',
    '600,110 640,85 685,95 720,110 790,105 850,85 920,55 900,20 850,5 780,5 740,20 725,60 740,100',
    '600,110 580,150 600,190 640,210 640,255',
    '685,95 655,115 660,145 690,155 685,190 700,230 680,265 640,260',
    '870,100 885,145 855,160 855,210 830,235 780,220 740,225 720,260 680,265',
    '925,55 885,90 870,100',
    '885,145 930,140 980,120 1005,145',
    '830,235 870,245 900,260 1000,245',
    '770,225 775,300 765,330 800,385 830,405 870,440 900,405 940,420 945,450 965,455',
    '800,385 740,415 740,460 700,465 675,520 610,540',
    '640,255 625,310 610,350 610,400 580,440 565,490 590,535 610,540',
    '635,578 610,540 545,560 510,575 455,560 455,510 450,480 430,460 415,430 420,400',
    '455,555 395,550 390,620 405,660',
    '420,400 355,405 320,445 315,500 295,545 282,585',
    '440,290 445,340 420,375 420,400',
    '440,290 370,290 345,250 310,260 280,290 240,340 200,365',
    '440,290 445,250 480,250 520,290 575,330 575,365 510,370 440,350',
    '575,365 610,385',
    '285,250 280,200 290,185',
    '430,190 420,230 445,250',
    '285,250 345,250',
    '280,130 240,120 215,150 220,180 185,220 185,260 175,300 155,330',
    '155,330 200,350 205,370 150,385 110,420 115,470 60,490 50,530 90,550 130,545 165,565 190,562',
    '0,500 50,495',
    '0,320 60,290 100,320 155,330',
    '110,90 160,80 190,110 250,95',
    '110,90 115,40 60,30',
    '80,260 110,290 120,320',
    '205,370 240,410 290,420 320,445',
  ].map(SE),
  ...[
    '330,10 355,50 410,55 430,100 420,125 450,130 470,95 520,80 545,50',
    '470,100 520,120 515,160 555,165 555,190 515,200 480,160 450,200 430,205',
    '545,45 580,85 600,130 625,170 650,205 690,210',
    '650,205 635,245 650,280 635,310 630,340 580,345 560,375 550,365 520,380 430,360 412,300',
    '690,210 720,185 785,155 790,100 770,80 700,50 665,40 670,10',
    '790,90 800,55 850,60 870,85 905,110 990,110 985,155 985,190 920,210 860,220 770,245 740,290 755,330 830,345 860,330',
    '690,210 720,230 770,245',
    '920,210 880,260 870,300 840,340',
    '985,190 1035,200 1055,240 1040,265 1075,300 1040,310 1035,380 990,415 930,390 900,390',
    '1075,300 1110,300 1120,315 1110,330 1140,340',
    '630,340 640,385 680,400 790,380 810,390 815,430 860,445 850,490 840,540 870,600 910,610',
    '550,380 550,450 535,500 515,540 520,590 510,640 545,650',
    '560,375 610,400 610,450 640,480 600,530 605,570 560,620 545,650',
    '680,400 690,460 735,490 770,530 770,560 730,600 725,630',
    '400,620 430,640 510,640 530,660 610,660 725,630 800,660 805,700 790,770 735,800',
    '610,660 630,700 610,745 570,770 590,800',
    '735,490 690,520 690,550 655,575 605,570',
    '800,660 850,690 895,720 950,765 960,800 1005,790',
    '895,720 870,660 910,610 900,580 930,560 980,580 1030,625 1085,635 1115,690 1110,710 1135,740',
    '725,630 800,640 850,690',
    '1085,635 1080,600 1110,540 1160,520',
    '930,390 940,450 910,500 925,540 930,560',
    '1035,380 1055,430 1025,490 1030,520 1100,530',
    '1140,415 1090,420 1095,490 1110,540',
    '765,480 810,490 840,540',
    '990,110 1065,105 1080,60 1065,20',
    '1140,100 1110,150 1130,180 1100,230 1055,240',
  ].map(SW),
];

/* Midpoint displacement gives the lines the ragged look of surveyed borders. */
let seed = 7;
const rand = () => {
  seed = (seed * 16807) % 2147483647;
  return seed / 2147483647 - 0.5;
};
const roughen = (pts: Pt[]): Pt[] => {
  const out: Pt[] = [pts[0]];
  const split = (a: Pt, b: Pt) => {
    const dx = b[0] - a[0];
    const dy = b[1] - a[1];
    const len = Math.hypot(dx, dy);
    if (len < 3) { out.push(b); return; }
    const k = rand() * Math.min(0.7, 4 / len);
    const m: Pt = [(a[0] + b[0]) / 2 - dy * k, (a[1] + b[1]) / 2 + dx * k];
    split(a, m);
    split(m, b);
  };
  for (let i = 1; i < pts.length; i++) split(pts[i - 1], pts[i]);
  return out;
};
const toPath = (pts: Pt[]) => 'M' + pts.map(p => `${p[0].toFixed(1)} ${p[1].toFixed(1)}`).join('L');
const outlinePath = toPath(roughen([...outline, outline[0]])) + 'Z';
const borderPath = borders.map(b => toPath(roughen(b))).join('');

const sites4A: Pt[] = [
  ...NW('797,330 864,330 828,370 840,366 926,366 934,407 1082,321 1069,557 1142,636 677,762 785,807 1037,771 1094,870'),
  ...NE('152,270 80,294 512,282 605,336 567,402 215,384 380,410 359,465 267,500 230,521 200,527 107,495 125,572 128,618 282,627 338,591 362,579 617,531 986,519 971,609 975,678 958,695 611,682 322,732 365,804 569,835 575,855 799,590 827,597 66,855 78,876 158,890'),
  ...SE('90,65 491,66 347,140 712,119 506,213 550,225 590,218 443,237 935,245 962,435 845,500 677,380 380,321 453,328 191,380 119,512 221,216 22,80 48,84 58,126 18,150 66,170 98,172 38,200 75,195 105,215 50,222 20,245 8,392'),
  ...SW('284,87 452,88 478,170 521,188 485,231 593,237 710,275 893,117 1103,190 1165,80 1145,240 1056,248 990,270 962,290 983,308 910,306 887,317 797,365 817,371 650,380 512,371 494,386 425,447 398,543 548,477 641,465 641,552 797,577 795,597 548,717 524,732 533,755 563,789 740,726 962,491'),
];
const sites5A: Pt[] = [...NW('909,808'), ...NE('810,565 684,853'), ...SW('1025,250 891,364'), ...SE('45,277 435,673')];

const tag = (to: (s: string) => Pt[], list: string): [string, Pt][] =>
  list.trim().split(/\s+/).map(item => {
    const [name, x, y] = item.split(',');
    return [name, to(`${x},${y}`)[0]];
  });
const placeNames = [
  ...tag(NW, '赤水市,885,325 习水县,1070,392 仁怀市,1080,563 金沙县,1103,722 七星关区,627,770 大方县,823,770 黔西县,968,855 赫章县,423,825'),
  ...tag(NE, '道真仡佬族苗族自治县,392,162 务川仡佬族苗族自治县,498,255 正安县,293,303 沿河土家族自治县,652,333 桐梓县,100,355 德江县,555,407 绥阳县,223,457 印江土家族苗族自治县,540,483 松桃苗族自治县,905,483 凤冈县,438,530 思南县,570,540 汇川区,92,545 江口县,800,573 碧江区,973,590 湄潭县,335,608 红花岗区,183,632 播州区,125,700 石阡县,612,692 万山区,953,668 余庆县,380,728 岑巩县,783,740 玉屏侗族自治县,1005,750 瓮安县,312,820 息烽县,20,815 开阳县,155,845 施秉县,570,840 镇远县,697,840'),
  ...tag(SE, '黄平县,462,50 三穗县,802,65 天柱县,988,47 福泉市,340,113 凯里市,503,173 台江县,630,160 剑河县,770,160 锦屏县,943,190 麻江县,368,223 雷山县,578,282 龙里县,150,190 贵定县,230,242 都匀市,337,343 丹寨县,487,332 黎平县,923,343 榕江县,687,380 惠水县,70,380 平塘县,217,477 三都水族自治县,507,473 从江县,770,500 独山县,362,535 荔波县,490,620 罗甸县,50,608 乌当区,120,127 白云区,135,80 花溪区,30,247'),
  ...tag(SW, '威宁彝族回族苗族自治县,270,65 钟山区,433,110 钟山区,495,160 纳雍县,683,102 织金县,878,162 修文县,1145,82 清镇市,1048,147 观山湖区,1130,192 平坝区,1017,247 水城县,540,283 普定县,845,277 六枝特区,690,315 西秀区,945,328 关岭布依族苗族自治县,765,400 长顺县,1075,397 晴隆县,653,447 镇宁布依族苗族自治县,933,458 盘州市,435,490 普安县,567,497 紫云苗族布依族自治县,975,510 兴仁市,663,605 贞丰县,812,610 望谟县,997,687 安龙县,710,717 册亨县,877,793 兴义市,497,822'),
];

/* ---------- layout view ---------- */

const DocFrame = styled.section`
  flex: 1;
  min-width: 0;
  margin: 0 5px 0 5px;
  display: flex;
  flex-direction: column;
  border: solid #6d6d6d;
  border-width: 2px 0 0 2px;
`;
const DocBody = styled.div`flex: 1; min-height: 0; display: flex;`;
const DocGrid = styled.div`
  flex: 1;
  min-width: 0;
  display: grid;
  grid-template-columns: 19px 1fr;
  grid-template-rows: 19px 1fr;
`;
const RulerTop = styled.div`grid-column: 1 / 3; padding: 1px 0 0 314px; overflow: hidden;`;
const RulerLeft = styled.div`padding: 211px 0 0 1px; overflow: hidden;`;
const RulerSvg = styled.svg`display: block; background: #fff; border: 1px solid #8a8a8a; font-family: 'Liberation Serif', serif; font-size: 12px;`;
const MapArea = styled.div`
  background: #fff;
  border: solid #6d6d6d;
  border-width: 2px 0 0 1px;
  overflow: hidden;
`;
const MapSvg = styled.svg`width: 100%; height: 100%; display: block;`;
const PlaceName = styled.text`
  font-family: 'Noto Sans CJK SC', sans-serif;
  font-size: 14px;
  fill: #8f8490;
  fill-opacity: 0.85;
  text-anchor: middle;
  dominant-baseline: central;
`;
const DocFoot = styled.div`
  height: 26px;
  display: flex;
  align-items: center;
  border-bottom: 2px solid #e2e2e2;
`;

const TopRuler = () => (
  <RulerSvg width="716" height="17">
    {Array.from({ length: 29 }, (_, i) => {
      const x = Math.round(23 + (i * 676) / 28);
      return (
        <g key={i}>
          <path d={`M${x} 4V15M${x + 12} 12V15`} stroke="#000" shapeRendering="crispEdges" />
          <text x={x + 2} y="9">{i + 1}</text>
        </g>
      );
    })}
    <path d="M12 12V15" stroke="#000" shapeRendering="crispEdges" />
  </RulerSvg>
);
const SideRuler = () => (
  <RulerSvg width="16" height="506">
    {Array.from({ length: 20 }, (_, i) => {
      const y = Math.round(22 + (i * 483) / 20);
      return (
        <g key={i}>
          <path d={`M4 ${y}H14M12 ${y - 12}H14`} stroke="#000" shapeRendering="crispEdges" />
          <text transform={`translate(9 ${y - 2}) rotate(-90)`}>{20 - i}</text>
        </g>
      );
    })}
  </RulerSvg>
);

const LayoutMap = () => (
  <MapSvg role="img" aria-label="贵州A级景区分布图">
    <g transform="translate(-353 -130)">
      <path d="M340 221H1538V1086H340" fill="none" stroke="#000" shapeRendering="crispEdges" />
      <path d="M340 285H1497V1055H340" fill="none" stroke="#35b0ae" strokeWidth="2" shapeRendering="crispEdges" />
      <clipPath id="province-edge"><path d={outlinePath} /></clipPath>
      <path d={outlinePath} fill="#efd0fa" stroke="#6c5a70" shapeRendering="crispEdges" />
      <path d={borderPath} clipPath="url(#province-edge)" fill="none" stroke="#6c5a70" shapeRendering="crispEdges" />
      {sites4A.map(([x, y], i) => <rect key={i} x={Math.round(x) - 7} y={Math.round(y) - 7} width="13" height="13" fill="#0070ff" />)}
      {sites5A.map(([x, y], i) => (
        <g key={i} transform={`translate(${Math.round(x)} ${Math.round(y)})`}>
          <rect x="-7" y="-6" width="14" height="12" rx="3" fill="#22ee22" stroke="#111" />
          <circle r="2" fill="#111" />
        </g>
      ))}
      {placeNames.map(([name, [x, y]], i) => <PlaceName key={i} x={Math.round(x)} y={Math.round(y) - 1}>{name}</PlaceName>)}
      {[[922, 285], [1497, 285], [1497, 670], [1497, 1055], [922, 1055]].map(([x, y], i) => (
        <rect key={i} x={x - 4} y={y - 4} width="7" height="7" fill="#35b0ae" stroke="#000" strokeWidth="2" />
      ))}
      <path d="M924 270L931 278H926V296H931L924 304L917 296H922V278H917Z" fill="#fff" stroke="#111" />
    </g>
  </MapSvg>
);

const DocumentView = () => (
  <DocFrame>
    <DocBody>
      <DocGrid>
        <RulerTop><TopRuler /></RulerTop>
        <RulerLeft><SideRuler /></RulerLeft>
        <MapArea><LayoutMap /></MapArea>
      </DocGrid>
      <ScrollV>
        <ScrollArrow aria-label="scroll up"><Chevron dir="up" size={14} /></ScrollArrow>
        <Space $n={203} /><ThumbV $n={782} /><Space $n={133} />
        <ScrollArrow aria-label="scroll down"><Chevron dir="down" size={14} /></ScrollArrow>
      </ScrollV>
    </DocBody>
    <DocFoot>
      <ToolButton $w={25} $h={24} aria-label="data view"><Icon name="dataView" size={10} /></ToolButton>
      <ToolButton $w={26} $h={24} $on aria-label="layout view"><Icon name="layoutView" size={10} /></ToolButton>
      <Divider $h={24} />
      <ToolButton $w={26} $h={24} aria-label="refresh"><Icon name="refresh" size={10} /></ToolButton>
      <ToolButton $w={26} $h={24} aria-label="pause"><Icon name="pause" size={10} /></ToolButton>
      <ScrollH $h={24}>
        <ScrollArrow aria-label="scroll left"><Chevron dir="left" size={14} /></ScrollArrow>
        <Space $n={306} /><ThumbH $n={695} /><Space $n={202} />
        <ScrollArrow aria-label="scroll right"><Chevron dir="right" size={14} /></ScrollArrow>
      </ScrollH>
      <Blank />
      <Blank />
    </DocFoot>
  </DocFrame>
);

/* ---------- status bar and taskbar ---------- */

const Status = styled.footer`
  height: 29px;
  display: flex;
  align-items: center;
  justify-content: flex-end;
  font-size: 19px;
  line-height: 29px;
  padding-top: 1px;
  white-space: pre;
`;
const Degrees = styled.span`display: flex; align-items: center; gap: 6px; width: 449px;`;
const Centimeters = styled.span`width: 422px;`;
const Taskbar = styled.div`
  height: 15px;
  display: flex;
  overflow: hidden;
  background: linear-gradient(90deg, #dfecf6, #d6e2ee 60%, #d9e5f0);
  padding-left: 72px;
`;
const TaskSearch = styled.input`
  width: 516px;
  height: 40px;
  border: 2px solid #c3c7cb;
  background: #fff;
`;
const TaskApps = styled.div`flex: 1; display: flex; padding-left: 147px;`;
const TaskApp = styled.button<{ $c: string; $on?: boolean }>`
  width: 75px;
  height: 48px;
  flex: none;
  display: flex;
  justify-content: center;
  padding-top: 11px;
  background: ${p => (p.$on ? '#f1f5fc' : 'transparent')};
  &::after { content: ''; width: 24px; height: 24px; border-radius: 50%; background: ${p => p.$c}; }
`;
const Clock = styled.span`width: 233px; font-size: 18px; line-height: 32px;`;

/* ---------- floating windows over the desktop ---------- */

const Recorder = styled.div`
  position: absolute;
  left: 60px;
  top: 15px;
  width: 239px;
  height: 48px;
  background: rgba(66, 66, 66, 0.7);
  color: #fff;
  font-size: 24px;
  display: flex;
  align-items: center;
  justify-content: space-between;
  padding: 0 30px 0 39px;
`;
const StopButton = styled.button`width: 24px; height: 23px; border-radius: 4px; background: #ff2a2a;`;
const Upload = styled.button`
  position: absolute;
  right: 160px;
  top: -4px;
  width: 156px;
  height: 39px;
  border-radius: 6px;
  border: 2px solid #4aaef2;
  overflow: hidden;
  display: flex;
  background: linear-gradient(180deg, #dff3fe, #b9e6fd);
  color: #45aeee;
  font-size: 18px;
`;
const UploadMark = styled.span`width: 43px; align-self: stretch; background: #2ba2f8; display: grid; place-items: center;`;
const UploadText = styled.span`flex: 1; align-self: center; text-align: center;`;
const Ime = styled.div`
  position: absolute;
  right: 36px;
  bottom: 58px;
  height: 39px;
  width: 290px;
  padding-left: 22px;
  display: flex;
  align-items: center;
  background: #fff;
  border: 1px solid #a9adb3;
  color: #2a6cb5;
`;
const ImeLogo = styled.svg`position: absolute; left: -26px; top: -5px; width: 46px; height: 46px;`;
const ImeButton = styled.button`flex: 1; height: 37px; display: grid; place-items: center; font-size: 21px; font-weight: 700;`;

const IME_ICONS: Record<string, React.ReactNode> = {
  punctuation: <><circle cx="9" cy="10" r="3" fill="none" stroke="#2a6cb5" strokeWidth="2" /><path d="M19 15A3 3 0 1 1 23 19C23 22 21 24 18 25C20 23 20 21 20 19Z" fill="#2a6cb5" /></>,
  emoji: <><circle cx="16" cy="16" r="13" fill="none" stroke="#2a6cb5" strokeWidth="3" /><path d="M12 9V14M20 9V14M9 18C12 25 20 25 23 18" stroke="#2a6cb5" strokeWidth="3" fill="none" /></>,
  voice: <><rect x="11" y="3" width="10" height="17" rx="5" fill="#2a6cb5" /><path d="M7 14C7 27 25 27 25 14M16 24V30M10 30H22" stroke="#2a6cb5" strokeWidth="3" fill="none" /></>,
  keyboard: <><rect x="1" y="5" width="30" height="23" rx="2" fill="#2a6cb5" /><path d="M5 11H28M5 16H28" stroke="#fff" strokeWidth="3" strokeDasharray="3 2" /><path d="M9 22H23" stroke="#fff" strokeWidth="3" /></>,
  account: <><circle cx="13" cy="9" r="5" fill="#b9c3d4" /><path d="M3 28C3 12 23 12 23 28Z" fill="#b9c3d4" /><rect x="17" y="17" width="13" height="13" fill="#a9b5ca" /><path d="M27 20H21V23H26V27H20" stroke="#fff" strokeWidth="2" fill="none" /></>,
  skin: <path d="M10 4C12 8 20 8 22 4L31 9L27 16L24 14V29H8V14L5 16L1 9Z" fill="#2878c8" />,
  tools: <><path d="M3 4H14V15H3ZM3 18H14V29H3ZM18 18H29V29H18Z" fill="#2a6cb5" /><rect x="19" y="5" width="9" height="9" fill="none" stroke="#2a6cb5" strokeWidth="2" /></>,
};

export default function App() {
  return (
    <>
      <GlobalStyle />
      <Shell>
        <Chrome>
          <MenuBar>
            {['File', 'Edit', 'View', 'Bookmarks', 'Insert', 'Selection', 'Geoprocessing', 'Customize', 'Windows', 'Help'].map(m => (
              <MenuItem key={m}>{m}</MenuItem>
            ))}
          </MenuBar>
          <BarRow>
            <Bar>
              <Grip />
              <Tools items={['new', 'open', 'save', 'print', '|', 'cut', 'copy', 'paste', 'remove', '|', 'undo', 'redo', '|', 'add', 'v', '|']} />
              <SelectBox $w={148} $h={26}>
                <Select $mono aria-label="Map scale"><option>1:3,736,022</option></Select>
                <Chevron />
              </SelectBox>
              <Tools items={['|', '*edit', '|', 'table', 'catalog', 'search', 'toolbox', 'python', '|', 'model']} />
              <BarEnd />
            </Bar>
            <Bar>
              <Grip />
              <TextButton>Editor<Caret /></TextButton>
              <Tools items={['|', 'gArrow', 'gArrowA', '|', 'gLine', 'gArc', 'gPoly', 'g', 'gPoint', '|', 'gCut', 'gReshape', 'gSplit', 'gCross', 'gRotate', '|', 'gAttr', 'gSketch', '|', 'gCreate']} />
              <BarEnd />
            </Bar>
          </BarRow>
          <BarRow $spread>
            <Bar>
              <Grip />
              <Tools items={['zoomIn', 'zoomOut', 'hand', 'globe', '|', 'fixedIn', 'fixedOut', '|', 'back', 'forward', '|', 'select', 'v', 'gClear', '|', '*pointer', '|', 'info', 'gFlash', 'gHtml', '|', 'measure', '|', 'find', 'route', 'xy', '|', 'gTime', '|', 'gViewer']} />
              <BarEnd />
            </Bar>
            <Bar>
              <Grip />
              <Tools items={['pZoomIn', 'pZoomOut', 'pPan', 'pFull', 'pActual', '|', 'pIn', 'pOut', '|', 'pBack', 'pForward']} />
              <SelectBox $w={60} $h={26}>
                <Select $mono aria-label="Page zoom"><option>73%</option></Select>
                <Chevron />
              </SelectBox>
              <Tools items={['|', 'pDraft', 'pFocus', 'pLayout', 'pPages']} />
              <BarEnd />
            </Bar>
          </BarRow>
        </Chrome>
        <Main>
          <TocPanel />
          <DocumentView />
          <CatalogPanel />
        </Main>
        <Status>
          <Degrees><Icon name="globe" size={16} />106.598  30.048 Decimal Degrees</Degrees>
          <Centimeters>14.78  19.40 Centimeters</Centimeters>
        </Status>
        <Taskbar>
          <TaskSearch aria-label="Search" />
          <TaskApps>
            <TaskApp $c="#38bcc8" aria-label="browser" />
            <TaskApp $c="transparent" aria-label="files" />
            <TaskApp $c="#1d5fa8" aria-label="store" />
            <TaskApp $c="#7ab36a" aria-label="notes" />
            <TaskApp $c="#27384f" $on aria-label="ArcMap" />
          </TaskApps>
          <Clock>23:04</Clock>
        </Taskbar>
      </Shell>
      <Recorder>00:03:56<StopButton aria-label="stop recording" /></Recorder>
      <Upload>
        <UploadMark>
          <Svg $s={30} viewBox="0 0 32 32"><g fill="none" stroke="#fff" strokeWidth="4"><circle cx="16" cy="9" r="5" /><circle cx="9" cy="20" r="6" /><circle cx="23" cy="20" r="6" /></g></Svg>
        </UploadMark>
        <UploadText>拖拽上传</UploadText>
      </Upload>
      <Ime>
        <ImeLogo viewBox="0 0 46 46">
          <path d="M3 8C3 6 4 5 6 5L34 1C36 1 37 2 38 4L44 38C44 40 43 41 41 41L12 45C10 45 9 44 8 42Z" fill="#ee5a24" />
          <path d="M33 12C24 8 13 11 14 18C15 24 33 21 33 28C33 36 20 36 13 32" stroke="#fff" strokeWidth="6" fill="none" />
        </ImeLogo>
        <ImeButton aria-label="Chinese">中</ImeButton>
        {Object.keys(IME_ICONS).map(k => (
          <ImeButton key={k} aria-label={k}><Svg $s={24} viewBox="0 0 32 32">{IME_ICONS[k]}</Svg></ImeButton>
        ))}
      </Ime>
    </>
  );
}
